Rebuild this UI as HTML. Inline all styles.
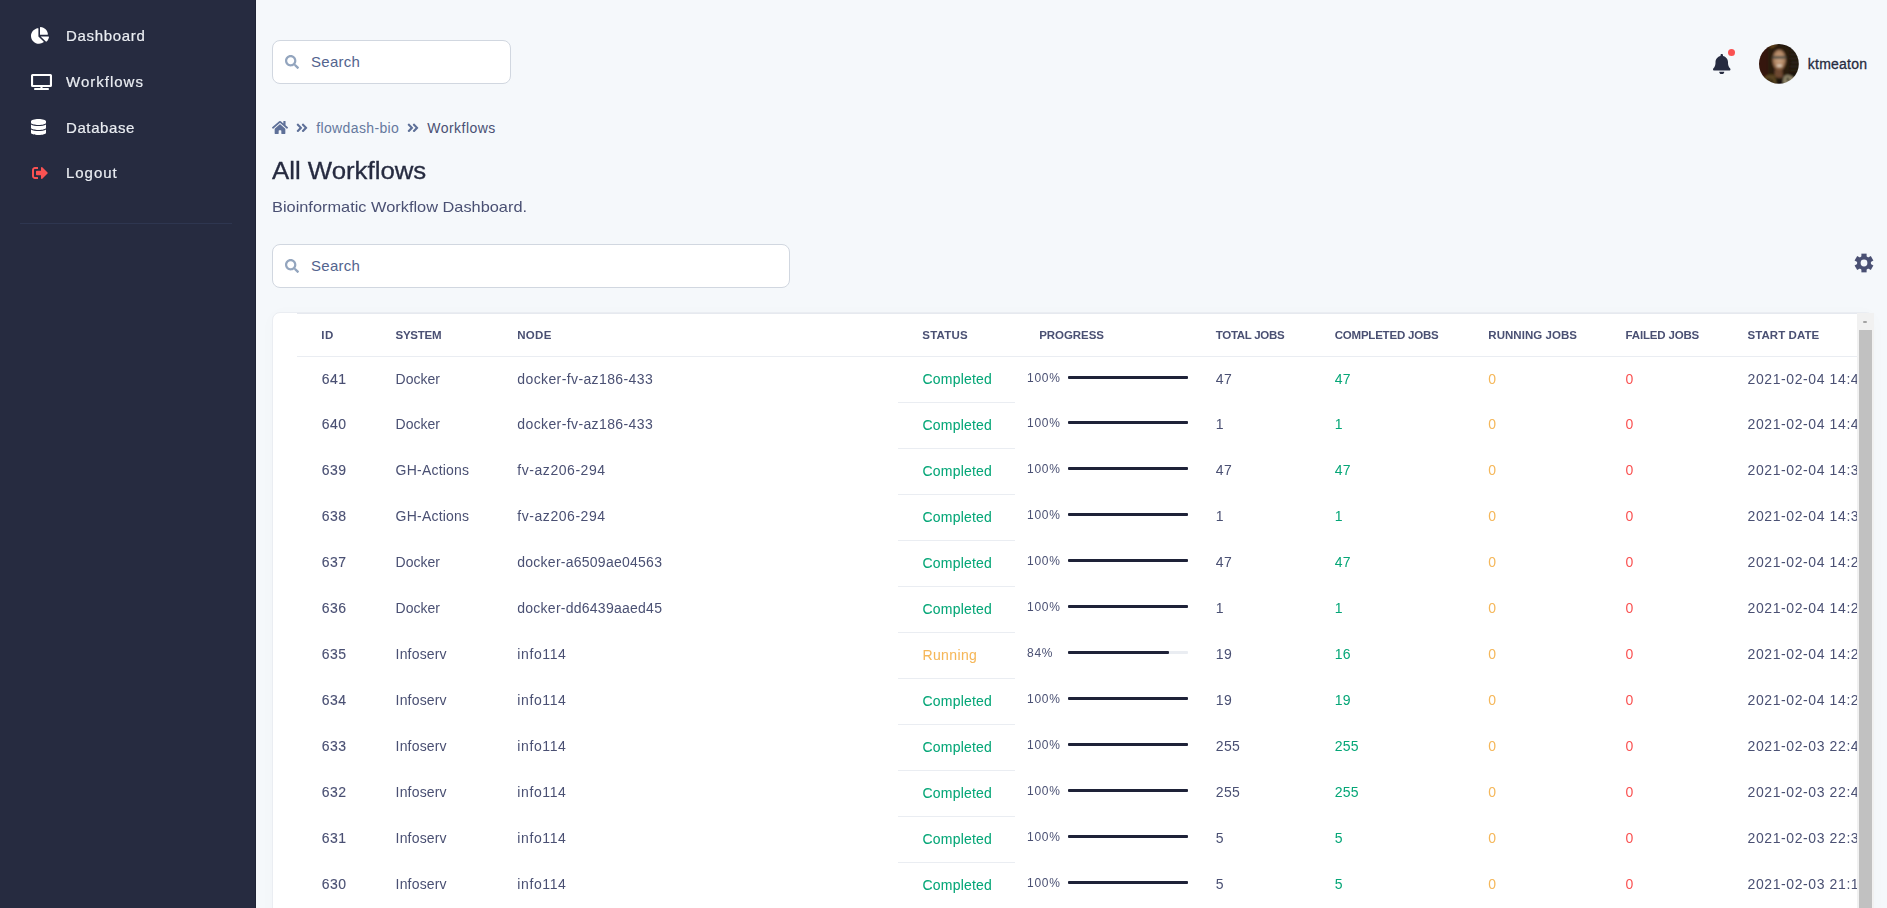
<!DOCTYPE html>
<html><head><meta charset="utf-8"><title>Workflows</title>
<style>
*{box-sizing:border-box;margin:0;padding:0}
html,body{width:1887px;height:908px;overflow:hidden;background:#F5F8FB;font-family:"Liberation Sans",sans-serif;color:#4A5073}
.t{position:absolute;white-space:nowrap;line-height:1}
.ic{position:absolute;display:block}
#side{position:absolute;left:0;top:0;width:256px;height:908px;background:#262B40;border-right:1px solid #1f2335}
.nav{color:#EAEDF2;-webkit-text-stroke:0.2px #EAEDF2;will-change:transform}
.box{position:absolute;background:#fff;border:1px solid #D1D7E0;border-radius:8px}
.ph{color:#53648E}
.card{position:absolute;left:272px;top:312px;width:1602px;height:620px;background:#fff;border:1px solid #EAEDF2;border-radius:8px;box-shadow:0 2px 18px rgba(0,0,0,.02);overflow:hidden}
.hd{font-weight:700;color:#4A5073}
.ok{color:#05A677}
.wn{color:#F5B759}
.dg{color:#FA5252}
.hl{position:absolute;height:1px;background:#EAEDF2}
.bar{position:absolute;height:3px;border-radius:1px}
</style></head><body>
<div id="side"></div>
<svg class="ic" style="left:31.4px;top:27.3px;width:18px;height:16.7px" viewBox="0 0 544 512" preserveAspectRatio="none"><path fill="#fff" d="M527.79 288H290.5l158.03 158.03c6.04 6.04 15.98 6.53 22.19 .68 38.7-36.46 65.32-85.61 73.13-140.86 1.34-9.46-6.51-17.85-16.06-17.85zm-15.830-64.8C503.72 103.74 408.26 8.280 288.8 .04 279.68-.59 272 7.1 272 16.24V240h223.77c9.14 0 16.82-7.68 16.19-16.8zM224 288V50.71c0-9.55-8.39-17.4-17.84-16.06C86.99 51.49-4.1 155.6 .14 280.37 4.5 408.51 114.83 513.59 243.03 511.98c50.4-.63 96.97-16.87 135.26-44.03 7.9-5.6 8.42-17.23 1.57-24.08L224 288z"/></svg>
<svg class="ic" style="left:31.4px;top:74px;width:21px;height:16px" viewBox="0 0 640 512" preserveAspectRatio="none"><path fill="#fff" d="M592 0H48A48 48 0 0 0 0 48v320a48 48 0 0 0 48 48h240v32H112a16 16 0 0 0-16 16v32a16 16 0 0 0 16 16h416a16 16 0 0 0 16-16v-32a16 16 0 0 0-16-16H352v-32h240a48 48 0 0 0 48-48V48a48 48 0 0 0-48-48zm-16 352H64V64h512z"/></svg>
<svg class="ic" style="left:31.4px;top:119px;width:15px;height:16px" viewBox="0 0 448 512" preserveAspectRatio="none"><path fill="#fff" d="M448 73.143v45.714C448 159.143 347.667 192 224 192S0 159.143 0 118.857V73.143C0 32.857 100.333 0 224 0s224 32.857 224 73.143zM448 176v102.857C448 319.143 347.667 352 224 352S0 319.143 0 278.857V176c48.125 33.143 136.208 48.572 224 48.572S399.874 209.143 448 176zm0 160v102.857C448 479.143 347.667 512 224 512S0 479.143 0 438.857V336c48.125 33.143 136.208 48.572 224 48.572S399.874 369.143 448 336z"/></svg>
<svg class="ic" style="left:32px;top:165px;width:16px;height:16px" viewBox="0 0 512 512" preserveAspectRatio="none"><path fill="#FA5252" d="M497 273L329 441c-15 15-41 4.5-41-17v-96H152c-13.3 0-24-10.7-24-24v-96c0-13.3 10.7-24 24-24h136V88c0-21.4 25.900-32 41-17l168 168c9.3 9.4 9.3 24.6 0 34zM192 436v-40c0-6.6-5.4-12-12-12H96c-17.7 0-32-14.3-32-32V160c0-17.7 14.3-32 32-32h84c6.6 0 12-5.4 12-12V76c0-6.6-5.4-12-12-12H96c-53 0-96 43-96 96v192c0 53 43 96 96 96h84c6.6 0 12-5.4 12-12z"/></svg>
<div class="t nav" style="left:66.3px;top:28.20px;font-size:15px;letter-spacing:0.69px">Dashboard</div>
<div class="t nav" style="left:66.3px;top:74.20px;font-size:15px;letter-spacing:1.0px">Workflows</div>
<div class="t nav" style="left:66.3px;top:119.50px;font-size:15px;letter-spacing:0.6px">Database</div>
<div class="t nav" style="left:66.3px;top:165.30px;font-size:15px;letter-spacing:0.95px">Logout</div>
<div style="position:absolute;left:20px;top:223px;width:212px;height:1px;background:#2E3650"></div>
<div class="box" style="left:272px;top:40px;width:239px;height:44px"></div>
<svg class="ic" style="left:285px;top:55px;width:14px;height:14px" viewBox="0 0 512 512" preserveAspectRatio="none"><path fill="#93A5BE" d="M505 442.7L405.3 343c-4.5-4.5-10.6-7-17-7H372c27.6-35.3 44-79.7 44-128C416 93.1 322.9 0 208 0S0 93.1 0 208s93.1 208 208 208c48.3 0 92.7-16.4 128-44v16.3c0 6.4 2.5 12.5 7 17l99.7 99.7c9.4 9.4 24.6 9.4 33.9 0l28.3-28.3c9.4-9.4 9.4-24.6 .1-34zM208 336c-70.7 0-128-57.2-128-128 0-70.7 57.2-128 128-128 70.7 0 128 57.2 128 128 0 70.7-57.2 128-128 128z"/></svg>
<div class="t ph" style="left:311.0px;top:54.00px;font-size:15px;letter-spacing:0.28px">Search</div>
<svg class="ic" style="left:1713px;top:53.6px;width:17.5px;height:20.4px" viewBox="0 0 448 512" preserveAspectRatio="none"><path fill="#262B40" d="M224 512c35.32 0 63.97-28.65 63.97-64H160.03c0 35.35 28.65 64 63.97 64zm215.39-149.71c-19.32-20.76-55.47-51.99-55.47-154.29 0-77.7-54.48-139.9-127.94-155.16V32c0-17.67-14.32-32-32-32s-32 14.33-32 32v20.84C118.56 68.1 64.08 130.3 64.08 208c0 102.3-36.15 133.53-55.47 154.29-6 6.45-8.66 14.16-8.61 21.71 .11 16.4 12.98 32 32.1 32h383.8c19.12 0 32-15.6 32.1-32 .05-7.55-2.61-15.27-8.61-21.71z"/></svg>
<div style="position:absolute;left:1728px;top:49px;width:7px;height:7px;border-radius:50%;background:#FA5252"></div>
<svg class="ic" style="left:1759.2px;top:43.9px;width:39.8px;height:39.8px" viewBox="0 0 40 40">
<defs><clipPath id="cc"><circle cx="20" cy="20" r="20"/></clipPath>
<filter id="bl" x="-10%" y="-10%" width="120%" height="120%"><feGaussianBlur stdDeviation="0.85"/></filter>
<radialGradient id="face" cx="0.5" cy="0.45" r="0.55"><stop offset="0" stop-color="#c9a383"/><stop offset="0.6" stop-color="#b48a68"/><stop offset="1" stop-color="#6e4a30"/></radialGradient></defs>
<g clip-path="url(#cc)"><g filter="url(#bl)">
<rect x="-2" y="-2" width="44" height="44" fill="#1f140c"/>
<rect x="-2" y="-2" width="13" height="44" fill="#34130a"/>
<rect x="29" y="-2" width="13" height="44" fill="#1a120b"/>
<g fill="#6a5a42" opacity=".5"><rect x="31" y="6" width="8" height="0.9"/><rect x="31" y="10" width="9" height="0.9"/><rect x="31" y="14" width="9" height="0.9"/><rect x="32" y="18" width="8" height="0.9"/><rect x="31" y="22" width="9" height="0.9"/><rect x="31" y="26" width="8" height="0.9"/></g>
<path d="M9 4 C12 0 28 -1 31 5 L31 30 L27 33 L14 34 L9 32 Z" fill="#2a1a0e"/>
<path d="M10 3 C13 0.5 17 0 19 0.5 L13 4Z" fill="#6b4a1e"/>
<ellipse cx="20.3" cy="16.3" rx="6.9" ry="10.8" fill="url(#face)"/>
<rect x="13.6" y="12" width="13.4" height="2.8" rx="1.2" fill="#55524a"/>
<ellipse cx="20.5" cy="21.8" rx="3" ry="1" fill="#e6d8c8"/>
<path d="M16 26 L23.5 26 L24 34 L15.5 34Z" fill="#6e4a32"/>
<path d="M4 40 L6 33 C9 30 13 30 17 32 L19 40Z" fill="#5a4420"/>
<path d="M24 40 L24.5 33 C28 30 32 31 35 34 L37 40Z" fill="#8e8468"/>
<path d="M16 32 L20.5 40 L25 32 L23 40 L18 40Z" fill="#151010"/>
<g fill="#141008"><rect x="8" y="35" width="3" height="2"/><rect x="28" y="34" width="2" height="3"/><rect x="12" y="36" width="2" height="3"/><rect x="31" y="37" width="2" height="2"/></g>
</g></g></svg>
<div class="t " style="left:1807.8px;top:56.75px;font-size:14px;color:#262B40;-webkit-text-stroke:0.3px #262B40;letter-spacing:0.24px">ktmeaton</div>
<svg class="ic" style="left:272px;top:119.9px;width:16px;height:14.9px" viewBox="0 0 576 512" preserveAspectRatio="none"><path fill="#5E7098" d="M280.37 148.26L96 300.11V464a16 16 0 0 0 16 16l112.06-.29a16 16 0 0 0 15.92-16V368a16 16 0 0 1 16-16h64a16 16 0 0 1 16 16v95.64a16 16 0 0 0 16 16.05L464 480a16 16 0 0 0 16-16V300L295.67 148.26a12.19 12.19 0 0 0-15.3 0zM571.6 251.47L488 182.56V44.05a12 12 0 0 0-12-12h-56a12 12 0 0 0-12 12v72.61L318.47 43a48 48 0 0 0-61 0L4.34 251.47a12 12 0 0 0-1.6 16.9l25.5 31A12 12 0 0 0 45.15 301l235.22-193.740a12.19 12.19 0 0 1 15.3 0L530.9 301a12 12 0 0 0 16.9-1.6l25.5-31a12 12 0 0 0-1.7-16.93z"/></svg>
<svg class="ic" style="left:295.8px;top:121.2px;width:12px;height:13.7px" viewBox="0 0 448 512" preserveAspectRatio="none"><path fill="#5E7098" d="M224.3 273l-136 136c-9.4 9.4-24.6 9.4-33.9 0l-22.6-22.6c-9.4-9.4-9.4-24.6 0-33.9l96.4-96.4-96.4-96.4c-9.4-9.4-9.4-24.6 0-33.9L54.3 103c9.4-9.4 24.6-9.4 33.9 0l136 136c9.5 9.4 9.5 24.6 .1 34zm192-34l-136-136c-9.4-9.4-24.6-9.4-33.9 0l-22.6 22.6c-9.4 9.4-9.4 24.6 0 33.9l96.4 96.4-96.4 96.4c-9.4 9.4-9.4 24.6 0 33.9l22.6 22.6c9.4 9.4 24.6 9.4 33.9 0l136-136c9.4-9.2 9.4-24.4 0-33.8z"/></svg>
<div class="t " style="left:316.2px;top:120.95px;font-size:14px;color:#66799E;letter-spacing:0.37px">flowdash-bio</div>
<svg class="ic" style="left:406.5px;top:121.2px;width:12px;height:13.7px" viewBox="0 0 448 512" preserveAspectRatio="none"><path fill="#5E7098" d="M224.3 273l-136 136c-9.4 9.4-24.6 9.4-33.9 0l-22.6-22.6c-9.4-9.4-9.4-24.6 0-33.9l96.4-96.4-96.4-96.4c-9.4-9.4-9.4-24.6 0-33.9L54.3 103c9.4-9.4 24.6-9.4 33.9 0l136 136c9.5 9.4 9.5 24.6 .1 34zm192-34l-136-136c-9.4-9.4-24.6-9.4-33.9 0l-22.6 22.6c-9.4 9.4-9.4 24.6 0 33.9l96.4 96.4-96.4 96.4c-9.4 9.4-9.4 24.6 0 33.9l22.6 22.6c9.4 9.4 24.6 9.4 33.9 0l136-136c9.4-9.2 9.4-24.4 0-33.8z"/></svg>
<div class="t " style="left:427.3px;top:120.95px;font-size:14px;color:#4A5073;letter-spacing:0.46px">Workflows</div>
<div class="t " style="left:272.2px;top:159.61px;font-size:23.5px;color:#262B40;transform:scaleX(1.097);transform-origin:0 0;-webkit-text-stroke:0.3px #262B40">All Workflows</div>
<div class="t " style="left:272.4px;top:199.10px;font-size:15px;color:#4A5073;transform:scaleX(1.09);transform-origin:0 0">Bioinformatic Workflow Dashboard.</div>
<div class="box" style="left:272px;top:244px;width:518px;height:44px"></div>
<svg class="ic" style="left:285px;top:259px;width:14px;height:14px" viewBox="0 0 512 512" preserveAspectRatio="none"><path fill="#93A5BE" d="M505 442.7L405.3 343c-4.5-4.5-10.6-7-17-7H372c27.6-35.3 44-79.7 44-128C416 93.1 322.9 0 208 0S0 93.1 0 208s93.1 208 208 208c48.3 0 92.7-16.4 128-44v16.3c0 6.4 2.5 12.5 7 17l99.7 99.7c9.4 9.4 24.6 9.4 33.9 0l28.3-28.3c9.4-9.4 9.4-24.6 .1-34zM208 336c-70.7 0-128-57.2-128-128 0-70.7 57.2-128 128-128 70.7 0 128 57.2 128 128 0 70.7-57.2 128-128 128z"/></svg>
<div class="t ph" style="left:311.0px;top:258.00px;font-size:15px;letter-spacing:0.28px">Search</div>
<svg class="ic" style="left:1854px;top:253.2px;width:20px;height:20px" viewBox="-10 -10 20 20">
<g fill="#4A5073">
<circle r="7"/>
<rect x="-2.6" y="-9.35" width="5.2" height="4" transform="rotate(0)"/>
<rect x="-2.6" y="-9.35" width="5.2" height="4" transform="rotate(60)"/>
<rect x="-2.6" y="-9.35" width="5.2" height="4" transform="rotate(120)"/>
<rect x="-2.6" y="-9.35" width="5.2" height="4" transform="rotate(180)"/>
<rect x="-2.6" y="-9.35" width="5.2" height="4" transform="rotate(240)"/>
<rect x="-2.6" y="-9.35" width="5.2" height="4" transform="rotate(300)"/>
</g><circle r="3.4" fill="#F5F8FB"/></svg>
<div class="card"></div>
<div class="hl" style="left:297px;top:313px;width:1560px;background:#E6E9EF"></div>
<div class="hl" style="left:297px;top:356px;width:1560px"></div>
<div style="position:absolute;left:0;top:0;width:1857px;height:908px;overflow:hidden">
<div class="t hd" style="left:321.3px;top:330.37px;font-size:11.5px;letter-spacing:0.5px">ID</div>
<div class="t hd" style="left:395.5px;top:330.37px;font-size:11.5px;letter-spacing:-0.26px">SYSTEM</div>
<div class="t hd" style="left:517.3px;top:330.37px;font-size:11.5px;letter-spacing:0.27px">NODE</div>
<div class="t hd" style="left:922.3px;top:330.37px;font-size:11.5px;letter-spacing:0.2px">STATUS</div>
<div class="t hd" style="left:1039.2px;top:330.37px;font-size:11.5px;letter-spacing:-0.06px">PROGRESS</div>
<div class="t hd" style="left:1215.8px;top:330.37px;font-size:11.5px;letter-spacing:-0.3px">TOTAL JOBS</div>
<div class="t hd" style="left:1334.7px;top:330.37px;font-size:11.5px;letter-spacing:-0.21px">COMPLETED JOBS</div>
<div class="t hd" style="left:1488.3px;top:330.37px;font-size:11.5px;letter-spacing:0.04px">RUNNING JOBS</div>
<div class="t hd" style="left:1625.6px;top:330.37px;font-size:11.5px;letter-spacing:-0.18px">FAILED JOBS</div>
<div class="t hd" style="left:1747.5px;top:330.37px;font-size:11.5px;letter-spacing:0.07px">START DATE</div>
<div class="t " style="left:321.7px;top:372.05px;font-size:14px;-webkit-text-stroke:0.12px #4A5073;letter-spacing:0.45px">641</div>
<div class="t " style="left:395.6px;top:372.05px;font-size:14px;letter-spacing:0px">Docker</div>
<div class="t " style="left:517.3px;top:372.05px;font-size:14px;letter-spacing:0.39px">docker-fv-az186-433</div>
<div class="t ok" style="left:922.5px;top:372.05px;font-size:14px;-webkit-text-stroke:0.05px currentColor;letter-spacing:0.2px">Completed</div>
<div class="hl" style="left:898px;top:402px;width:117px"></div>
<div class="t " style="left:1027.1px;top:371.74px;font-size:12px;letter-spacing:0.7px">100%</div>
<div class="bar" style="left:1068px;top:376px;width:120px;background:#EAEDF2"></div>
<div class="bar" style="left:1068px;top:376px;width:120.0px;background:#1E2238"></div>
<div class="t " style="left:1215.8px;top:372.05px;font-size:14px;letter-spacing:0.3px">47</div>
<div class="t ok" style="left:1334.7px;top:372.05px;font-size:14px;letter-spacing:0.3px">47</div>
<div class="t wn" style="left:1488.3px;top:372.05px;font-size:14px;">0</div>
<div class="t dg" style="left:1625.6px;top:372.05px;font-size:14px;">0</div>
<div class="t " style="left:1747.5px;top:372.05px;font-size:14px;letter-spacing:0.6px">2021-02-04 14:45:12</div>
<div class="t " style="left:321.7px;top:417.05px;font-size:14px;-webkit-text-stroke:0.12px #4A5073;letter-spacing:0.45px">640</div>
<div class="t " style="left:395.6px;top:417.05px;font-size:14px;letter-spacing:0px">Docker</div>
<div class="t " style="left:517.3px;top:417.05px;font-size:14px;letter-spacing:0.39px">docker-fv-az186-433</div>
<div class="t ok" style="left:922.5px;top:418.05px;font-size:14px;-webkit-text-stroke:0.05px currentColor;letter-spacing:0.2px">Completed</div>
<div class="hl" style="left:898px;top:448px;width:117px"></div>
<div class="t " style="left:1027.1px;top:416.74px;font-size:12px;letter-spacing:0.7px">100%</div>
<div class="bar" style="left:1068px;top:421px;width:120px;background:#EAEDF2"></div>
<div class="bar" style="left:1068px;top:421px;width:120.0px;background:#1E2238"></div>
<div class="t " style="left:1215.8px;top:417.05px;font-size:14px;letter-spacing:0.3px">1</div>
<div class="t ok" style="left:1334.7px;top:417.05px;font-size:14px;letter-spacing:0.3px">1</div>
<div class="t wn" style="left:1488.3px;top:417.05px;font-size:14px;">0</div>
<div class="t dg" style="left:1625.6px;top:417.05px;font-size:14px;">0</div>
<div class="t " style="left:1747.5px;top:417.05px;font-size:14px;letter-spacing:0.6px">2021-02-04 14:45:12</div>
<div class="t " style="left:321.7px;top:463.05px;font-size:14px;-webkit-text-stroke:0.12px #4A5073;letter-spacing:0.45px">639</div>
<div class="t " style="left:395.6px;top:463.05px;font-size:14px;letter-spacing:0.21px">GH-Actions</div>
<div class="t " style="left:517.3px;top:463.05px;font-size:14px;letter-spacing:0.55px">fv-az206-294</div>
<div class="t ok" style="left:922.5px;top:464.05px;font-size:14px;-webkit-text-stroke:0.05px currentColor;letter-spacing:0.2px">Completed</div>
<div class="hl" style="left:898px;top:494px;width:117px"></div>
<div class="t " style="left:1027.1px;top:462.74px;font-size:12px;letter-spacing:0.7px">100%</div>
<div class="bar" style="left:1068px;top:467px;width:120px;background:#EAEDF2"></div>
<div class="bar" style="left:1068px;top:467px;width:120.0px;background:#1E2238"></div>
<div class="t " style="left:1215.8px;top:463.05px;font-size:14px;letter-spacing:0.3px">47</div>
<div class="t ok" style="left:1334.7px;top:463.05px;font-size:14px;letter-spacing:0.3px">47</div>
<div class="t wn" style="left:1488.3px;top:463.05px;font-size:14px;">0</div>
<div class="t dg" style="left:1625.6px;top:463.05px;font-size:14px;">0</div>
<div class="t " style="left:1747.5px;top:463.05px;font-size:14px;letter-spacing:0.6px">2021-02-04 14:35:12</div>
<div class="t " style="left:321.7px;top:509.05px;font-size:14px;-webkit-text-stroke:0.12px #4A5073;letter-spacing:0.45px">638</div>
<div class="t " style="left:395.6px;top:509.05px;font-size:14px;letter-spacing:0.21px">GH-Actions</div>
<div class="t " style="left:517.3px;top:509.05px;font-size:14px;letter-spacing:0.55px">fv-az206-294</div>
<div class="t ok" style="left:922.5px;top:510.05px;font-size:14px;-webkit-text-stroke:0.05px currentColor;letter-spacing:0.2px">Completed</div>
<div class="hl" style="left:898px;top:540px;width:117px"></div>
<div class="t " style="left:1027.1px;top:508.74px;font-size:12px;letter-spacing:0.7px">100%</div>
<div class="bar" style="left:1068px;top:513px;width:120px;background:#EAEDF2"></div>
<div class="bar" style="left:1068px;top:513px;width:120.0px;background:#1E2238"></div>
<div class="t " style="left:1215.8px;top:509.05px;font-size:14px;letter-spacing:0.3px">1</div>
<div class="t ok" style="left:1334.7px;top:509.05px;font-size:14px;letter-spacing:0.3px">1</div>
<div class="t wn" style="left:1488.3px;top:509.05px;font-size:14px;">0</div>
<div class="t dg" style="left:1625.6px;top:509.05px;font-size:14px;">0</div>
<div class="t " style="left:1747.5px;top:509.05px;font-size:14px;letter-spacing:0.6px">2021-02-04 14:35:12</div>
<div class="t " style="left:321.7px;top:555.05px;font-size:14px;-webkit-text-stroke:0.12px #4A5073;letter-spacing:0.45px">637</div>
<div class="t " style="left:395.6px;top:555.05px;font-size:14px;letter-spacing:0px">Docker</div>
<div class="t " style="left:517.3px;top:555.05px;font-size:14px;letter-spacing:0.25px">docker-a6509ae04563</div>
<div class="t ok" style="left:922.5px;top:556.05px;font-size:14px;-webkit-text-stroke:0.05px currentColor;letter-spacing:0.2px">Completed</div>
<div class="hl" style="left:898px;top:586px;width:117px"></div>
<div class="t " style="left:1027.1px;top:554.74px;font-size:12px;letter-spacing:0.7px">100%</div>
<div class="bar" style="left:1068px;top:559px;width:120px;background:#EAEDF2"></div>
<div class="bar" style="left:1068px;top:559px;width:120.0px;background:#1E2238"></div>
<div class="t " style="left:1215.8px;top:555.05px;font-size:14px;letter-spacing:0.3px">47</div>
<div class="t ok" style="left:1334.7px;top:555.05px;font-size:14px;letter-spacing:0.3px">47</div>
<div class="t wn" style="left:1488.3px;top:555.05px;font-size:14px;">0</div>
<div class="t dg" style="left:1625.6px;top:555.05px;font-size:14px;">0</div>
<div class="t " style="left:1747.5px;top:555.05px;font-size:14px;letter-spacing:0.6px">2021-02-04 14:25:12</div>
<div class="t " style="left:321.7px;top:601.05px;font-size:14px;-webkit-text-stroke:0.12px #4A5073;letter-spacing:0.45px">636</div>
<div class="t " style="left:395.6px;top:601.05px;font-size:14px;letter-spacing:0px">Docker</div>
<div class="t " style="left:517.3px;top:601.05px;font-size:14px;letter-spacing:0.25px">docker-dd6439aaed45</div>
<div class="t ok" style="left:922.5px;top:602.05px;font-size:14px;-webkit-text-stroke:0.05px currentColor;letter-spacing:0.2px">Completed</div>
<div class="hl" style="left:898px;top:632px;width:117px"></div>
<div class="t " style="left:1027.1px;top:600.74px;font-size:12px;letter-spacing:0.7px">100%</div>
<div class="bar" style="left:1068px;top:605px;width:120px;background:#EAEDF2"></div>
<div class="bar" style="left:1068px;top:605px;width:120.0px;background:#1E2238"></div>
<div class="t " style="left:1215.8px;top:601.05px;font-size:14px;letter-spacing:0.3px">1</div>
<div class="t ok" style="left:1334.7px;top:601.05px;font-size:14px;letter-spacing:0.3px">1</div>
<div class="t wn" style="left:1488.3px;top:601.05px;font-size:14px;">0</div>
<div class="t dg" style="left:1625.6px;top:601.05px;font-size:14px;">0</div>
<div class="t " style="left:1747.5px;top:601.05px;font-size:14px;letter-spacing:0.6px">2021-02-04 14:25:12</div>
<div class="t " style="left:321.7px;top:647.05px;font-size:14px;-webkit-text-stroke:0.12px #4A5073;letter-spacing:0.45px">635</div>
<div class="t " style="left:395.6px;top:647.05px;font-size:14px;letter-spacing:0.17px">Infoserv</div>
<div class="t " style="left:517.3px;top:647.05px;font-size:14px;letter-spacing:0.62px">info114</div>
<div class="t wn" style="left:922.5px;top:648.05px;font-size:14px;-webkit-text-stroke:0.05px currentColor;letter-spacing:0.36px">Running</div>
<div class="hl" style="left:898px;top:678px;width:117px"></div>
<div class="t " style="left:1027.1px;top:646.74px;font-size:12px;letter-spacing:0.7px">84%</div>
<div class="bar" style="left:1068px;top:651px;width:120px;background:#EAEDF2"></div>
<div class="bar" style="left:1068px;top:651px;width:100.8px;background:#1E2238"></div>
<div class="t " style="left:1215.8px;top:647.05px;font-size:14px;letter-spacing:0.3px">19</div>
<div class="t ok" style="left:1334.7px;top:647.05px;font-size:14px;letter-spacing:0.3px">16</div>
<div class="t wn" style="left:1488.3px;top:647.05px;font-size:14px;">0</div>
<div class="t dg" style="left:1625.6px;top:647.05px;font-size:14px;">0</div>
<div class="t " style="left:1747.5px;top:647.05px;font-size:14px;letter-spacing:0.6px">2021-02-04 14:25:12</div>
<div class="t " style="left:321.7px;top:693.05px;font-size:14px;-webkit-text-stroke:0.12px #4A5073;letter-spacing:0.45px">634</div>
<div class="t " style="left:395.6px;top:693.05px;font-size:14px;letter-spacing:0.17px">Infoserv</div>
<div class="t " style="left:517.3px;top:693.05px;font-size:14px;letter-spacing:0.62px">info114</div>
<div class="t ok" style="left:922.5px;top:694.05px;font-size:14px;-webkit-text-stroke:0.05px currentColor;letter-spacing:0.2px">Completed</div>
<div class="hl" style="left:898px;top:724px;width:117px"></div>
<div class="t " style="left:1027.1px;top:692.74px;font-size:12px;letter-spacing:0.7px">100%</div>
<div class="bar" style="left:1068px;top:697px;width:120px;background:#EAEDF2"></div>
<div class="bar" style="left:1068px;top:697px;width:120.0px;background:#1E2238"></div>
<div class="t " style="left:1215.8px;top:693.05px;font-size:14px;letter-spacing:0.3px">19</div>
<div class="t ok" style="left:1334.7px;top:693.05px;font-size:14px;letter-spacing:0.3px">19</div>
<div class="t wn" style="left:1488.3px;top:693.05px;font-size:14px;">0</div>
<div class="t dg" style="left:1625.6px;top:693.05px;font-size:14px;">0</div>
<div class="t " style="left:1747.5px;top:693.05px;font-size:14px;letter-spacing:0.6px">2021-02-04 14:25:12</div>
<div class="t " style="left:321.7px;top:739.05px;font-size:14px;-webkit-text-stroke:0.12px #4A5073;letter-spacing:0.45px">633</div>
<div class="t " style="left:395.6px;top:739.05px;font-size:14px;letter-spacing:0.17px">Infoserv</div>
<div class="t " style="left:517.3px;top:739.05px;font-size:14px;letter-spacing:0.62px">info114</div>
<div class="t ok" style="left:922.5px;top:740.05px;font-size:14px;-webkit-text-stroke:0.05px currentColor;letter-spacing:0.2px">Completed</div>
<div class="hl" style="left:898px;top:770px;width:117px"></div>
<div class="t " style="left:1027.1px;top:738.74px;font-size:12px;letter-spacing:0.7px">100%</div>
<div class="bar" style="left:1068px;top:743px;width:120px;background:#EAEDF2"></div>
<div class="bar" style="left:1068px;top:743px;width:120.0px;background:#1E2238"></div>
<div class="t " style="left:1215.8px;top:739.05px;font-size:14px;letter-spacing:0.3px">255</div>
<div class="t ok" style="left:1334.7px;top:739.05px;font-size:14px;letter-spacing:0.3px">255</div>
<div class="t wn" style="left:1488.3px;top:739.05px;font-size:14px;">0</div>
<div class="t dg" style="left:1625.6px;top:739.05px;font-size:14px;">0</div>
<div class="t " style="left:1747.5px;top:739.05px;font-size:14px;letter-spacing:0.6px">2021-02-03 22:45:12</div>
<div class="t " style="left:321.7px;top:785.05px;font-size:14px;-webkit-text-stroke:0.12px #4A5073;letter-spacing:0.45px">632</div>
<div class="t " style="left:395.6px;top:785.05px;font-size:14px;letter-spacing:0.17px">Infoserv</div>
<div class="t " style="left:517.3px;top:785.05px;font-size:14px;letter-spacing:0.62px">info114</div>
<div class="t ok" style="left:922.5px;top:786.05px;font-size:14px;-webkit-text-stroke:0.05px currentColor;letter-spacing:0.2px">Completed</div>
<div class="hl" style="left:898px;top:816px;width:117px"></div>
<div class="t " style="left:1027.1px;top:784.74px;font-size:12px;letter-spacing:0.7px">100%</div>
<div class="bar" style="left:1068px;top:789px;width:120px;background:#EAEDF2"></div>
<div class="bar" style="left:1068px;top:789px;width:120.0px;background:#1E2238"></div>
<div class="t " style="left:1215.8px;top:785.05px;font-size:14px;letter-spacing:0.3px">255</div>
<div class="t ok" style="left:1334.7px;top:785.05px;font-size:14px;letter-spacing:0.3px">255</div>
<div class="t wn" style="left:1488.3px;top:785.05px;font-size:14px;">0</div>
<div class="t dg" style="left:1625.6px;top:785.05px;font-size:14px;">0</div>
<div class="t " style="left:1747.5px;top:785.05px;font-size:14px;letter-spacing:0.6px">2021-02-03 22:45:12</div>
<div class="t " style="left:321.7px;top:831.05px;font-size:14px;-webkit-text-stroke:0.12px #4A5073;letter-spacing:0.45px">631</div>
<div class="t " style="left:395.6px;top:831.05px;font-size:14px;letter-spacing:0.17px">Infoserv</div>
<div class="t " style="left:517.3px;top:831.05px;font-size:14px;letter-spacing:0.62px">info114</div>
<div class="t ok" style="left:922.5px;top:832.05px;font-size:14px;-webkit-text-stroke:0.05px currentColor;letter-spacing:0.2px">Completed</div>
<div class="hl" style="left:898px;top:862px;width:117px"></div>
<div class="t " style="left:1027.1px;top:830.74px;font-size:12px;letter-spacing:0.7px">100%</div>
<div class="bar" style="left:1068px;top:835px;width:120px;background:#EAEDF2"></div>
<div class="bar" style="left:1068px;top:835px;width:120.0px;background:#1E2238"></div>
<div class="t " style="left:1215.8px;top:831.05px;font-size:14px;letter-spacing:0.3px">5</div>
<div class="t ok" style="left:1334.7px;top:831.05px;font-size:14px;letter-spacing:0.3px">5</div>
<div class="t wn" style="left:1488.3px;top:831.05px;font-size:14px;">0</div>
<div class="t dg" style="left:1625.6px;top:831.05px;font-size:14px;">0</div>
<div class="t " style="left:1747.5px;top:831.05px;font-size:14px;letter-spacing:0.6px">2021-02-03 22:35:12</div>
<div class="t " style="left:321.7px;top:877.05px;font-size:14px;-webkit-text-stroke:0.12px #4A5073;letter-spacing:0.45px">630</div>
<div class="t " style="left:395.6px;top:877.05px;font-size:14px;letter-spacing:0.17px">Infoserv</div>
<div class="t " style="left:517.3px;top:877.05px;font-size:14px;letter-spacing:0.62px">info114</div>
<div class="t ok" style="left:922.5px;top:878.05px;font-size:14px;-webkit-text-stroke:0.05px currentColor;letter-spacing:0.2px">Completed</div>
<div class="hl" style="left:898px;top:908px;width:117px"></div>
<div class="t " style="left:1027.1px;top:876.74px;font-size:12px;letter-spacing:0.7px">100%</div>
<div class="bar" style="left:1068px;top:881px;width:120px;background:#EAEDF2"></div>
<div class="bar" style="left:1068px;top:881px;width:120.0px;background:#1E2238"></div>
<div class="t " style="left:1215.8px;top:877.05px;font-size:14px;letter-spacing:0.3px">5</div>
<div class="t ok" style="left:1334.7px;top:877.05px;font-size:14px;letter-spacing:0.3px">5</div>
<div class="t wn" style="left:1488.3px;top:877.05px;font-size:14px;">0</div>
<div class="t dg" style="left:1625.6px;top:877.05px;font-size:14px;">0</div>
<div class="t " style="left:1747.5px;top:877.05px;font-size:14px;letter-spacing:0.6px">2021-02-03 21:15:12</div>
</div>
<div style="position:absolute;left:1857px;top:313px;width:17px;height:595px;background:#F1F1F1"></div>
<div style="position:absolute;left:1859px;top:330px;width:13px;height:578px;background:#C1C1C1"></div>
<div style="position:absolute;left:1863px;top:321px;width:4px;height:2px;background:#A3A3A3;border-radius:1px"></div>
</body></html>
